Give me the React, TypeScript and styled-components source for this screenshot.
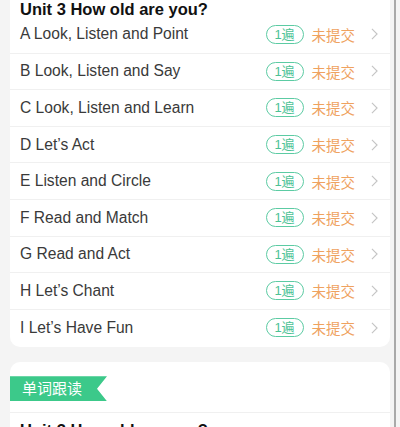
import React from "react";
import styled, { createGlobalStyle } from "styled-components";

const lessons = [
  "A Look, Listen and Point",
  "B Look, Listen and Say",
  "C Look, Listen and Learn",
  "D Let’s Act",
  "E Listen and Circle",
  "F Read and Match",
  "G Read and Act",
  "H Let’s Chant",
  "I Let’s Have Fun",
];

const App = () => {
  return (
    <Page>
      <GlobalStyle />
      <Card>
        <Title>Unit 3 How old are you?</Title>
        {lessons.map((name, i) => (
          <Row key={name} first={i === 0}>
            <Name>{name}</Name>
            <Right>
              <Times>1遍</Times>
              <Status>未提交</Status>
              <Chevron viewBox="0 0 8 14">
                <path d="M1 1l6 6-6 6" />
              </Chevron>
            </Right>
          </Row>
        ))}
      </Card>
      <Card2>
        <Ribbon>单词跟读</Ribbon>
        <SubTitle>Unit 3 How old are you?</SubTitle>
      </Card2>
      <ScrollBar />
    </Page>
  );
};

export default App;

const GlobalStyle = createGlobalStyle`
  html, body {
    margin: 0;
    padding: 0;
    background: #f4f4f4;
    overflow: hidden;
  }
  body {
    font-family: "Liberation Sans", "Noto Sans CJK SC", sans-serif;
  }
`;

const Page = styled.div`
  width: 400px;
  height: 427px;
  padding: 0 10px;
  box-sizing: border-box;
  overflow: hidden;
  display: flex;
  flex-direction: column;
  gap: 15px;
`;

const Card = styled.div`
  width: 380px;
  margin-top: -10px;
  background: #ffffff;
  border-radius: 10px;
  padding-bottom: 2px;
`;

const Title = styled.div`
  height: 26px;
  box-sizing: border-box;
  padding: 10px 0 0 10px;
  line-height: 19px;
  font-size: 16.5px;
  font-weight: bold;
  color: #111111;
`;

const Row = styled.div<{ first?: boolean }>`
  height: 36.6px;
  box-sizing: border-box;
  display: flex;
  align-items: center;
  justify-content: space-between;
  padding: 0 12px 0 10px;
  border-top: ${(p) => (p.first ? "none" : "1px solid #f0f0f0")};
`;

const Name = styled.div`
  font-size: 15.6px;
  color: #3a3a3a;
`;

const Right = styled.div`
  display: flex;
  align-items: center;
`;

const Times = styled.div`
  width: 38px;
  height: 19px;
  box-sizing: border-box;
  border: 1px solid #5ccba3;
  border-radius: 10px;
  color: #4cc295;
  font-size: 13px;
  line-height: 17px;
  text-align: center;
`;

const Status = styled.div`
  margin-left: 8px;
  font-size: 14.5px;
  color: #efa25f;
`;

const Chevron = styled.svg`
  width: 7px;
  height: 12px;
  margin-left: 16px;
  fill: none;
  stroke: #c4c4c4;
  stroke-width: 1.3;
`;

const Card2 = styled.div`
  width: 380px;
  background: #ffffff;
  border-radius: 10px;
  padding-top: 14px;
  flex: 1;
`;

const Ribbon = styled.div`
  width: 97px;
  height: 25px;
  box-sizing: border-box;
  padding-left: 12px;
  background: #3cc98a;
  color: #ffffff;
  font-size: 15px;
  line-height: 25px;
  clip-path: polygon(0 0, 100% 0, 87px 50%, 100% 100%, 0 100%);
`;

const SubTitle = styled.div`
  margin-top: 11px;
  border-top: 1px solid #f0f0f0;
  padding: 8px 0 0 10px;
  font-size: 16.5px;
  font-weight: bold;
  color: #111111;
`;

const ScrollBar = styled.div`
  position: fixed;
  top: 0;
  right: 4px;
  width: 2.5px;
  height: 427px;
  background: #a9a9a9;
`;
